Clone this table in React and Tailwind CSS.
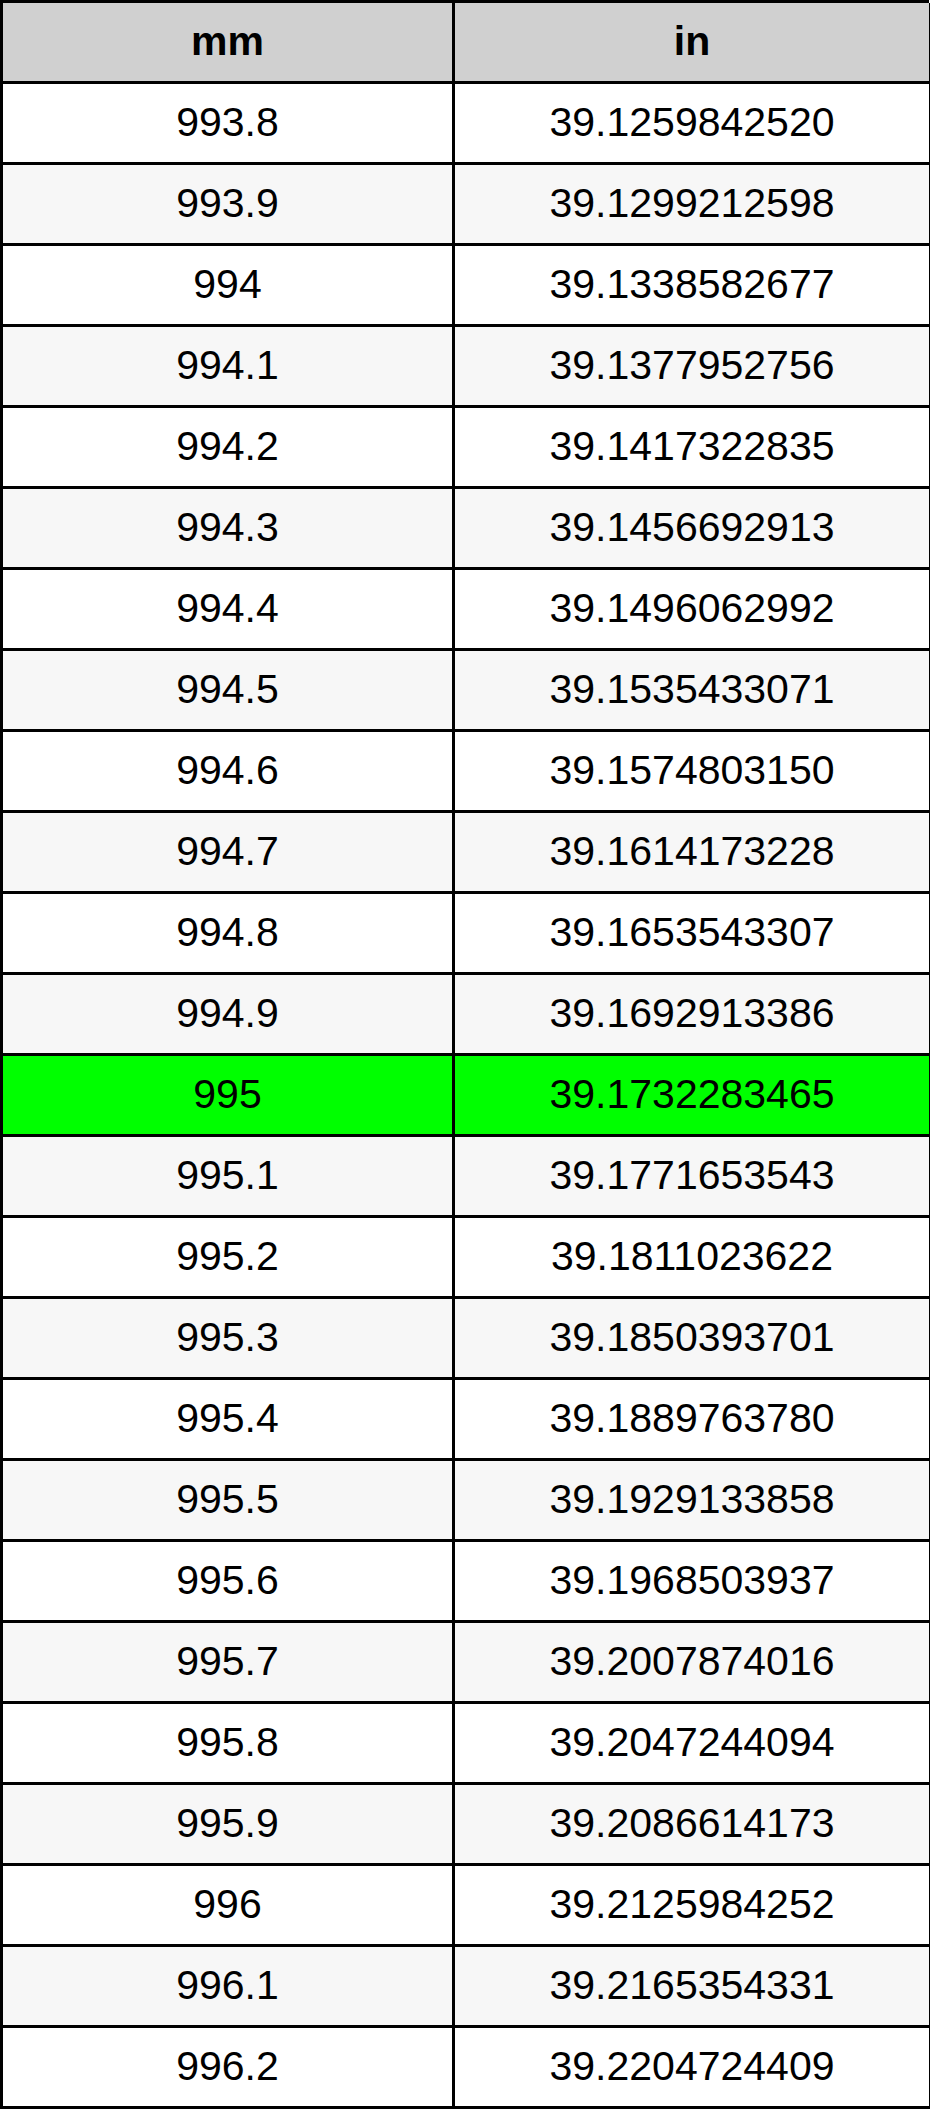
const rows = [
  ["993.8", "39.1259842520"],
  ["993.9", "39.1299212598"],
  ["994", "39.1338582677"],
  ["994.1", "39.1377952756"],
  ["994.2", "39.1417322835"],
  ["994.3", "39.1456692913"],
  ["994.4", "39.1496062992"],
  ["994.5", "39.1535433071"],
  ["994.6", "39.1574803150"],
  ["994.7", "39.1614173228"],
  ["994.8", "39.1653543307"],
  ["994.9", "39.1692913386"],
  ["995", "39.1732283465"],
  ["995.1", "39.1771653543"],
  ["995.2", "39.1811023622"],
  ["995.3", "39.1850393701"],
  ["995.4", "39.1889763780"],
  ["995.5", "39.1929133858"],
  ["995.6", "39.1968503937"],
  ["995.7", "39.2007874016"],
  ["995.8", "39.2047244094"],
  ["995.9", "39.2086614173"],
  ["996", "39.2125984252"],
  ["996.1", "39.2165354331"],
  ["996.2", "39.2204724409"],
];

function Cell({ children, className = "" }) {
  return (
    <div className={`h-[81px] flex items-center justify-center border-r-[3px] border-b-[3px] border-black ${className}`}>
      {children}
    </div>
  );
}

export default function App() {
  return (
    <div className="bg-white min-h-[2115px]" style={{ fontFamily: '"Liberation Sans", Arial, sans-serif' }}>
      <div className="w-[929px] grid grid-cols-[452px_477px] border-l-[3px] border-t-[3px] border-black text-[41px] text-black">
        <Cell className="bg-[#d0d0d0] font-bold">mm</Cell>
        <Cell className="bg-[#d0d0d0] font-bold">in</Cell>
        {rows.map(([mm, inch], i) => {
          const bg = mm === "995" ? "bg-[#00ff00]" : i % 2 === 1 ? "bg-[#f7f7f7]" : "bg-white";
          return [
            <Cell key={mm + "a"} className={bg}>{mm}</Cell>,
            <Cell key={mm + "b"} className={bg}>{inch}</Cell>,
          ];
        })}
      </div>
    </div>
  );
}
